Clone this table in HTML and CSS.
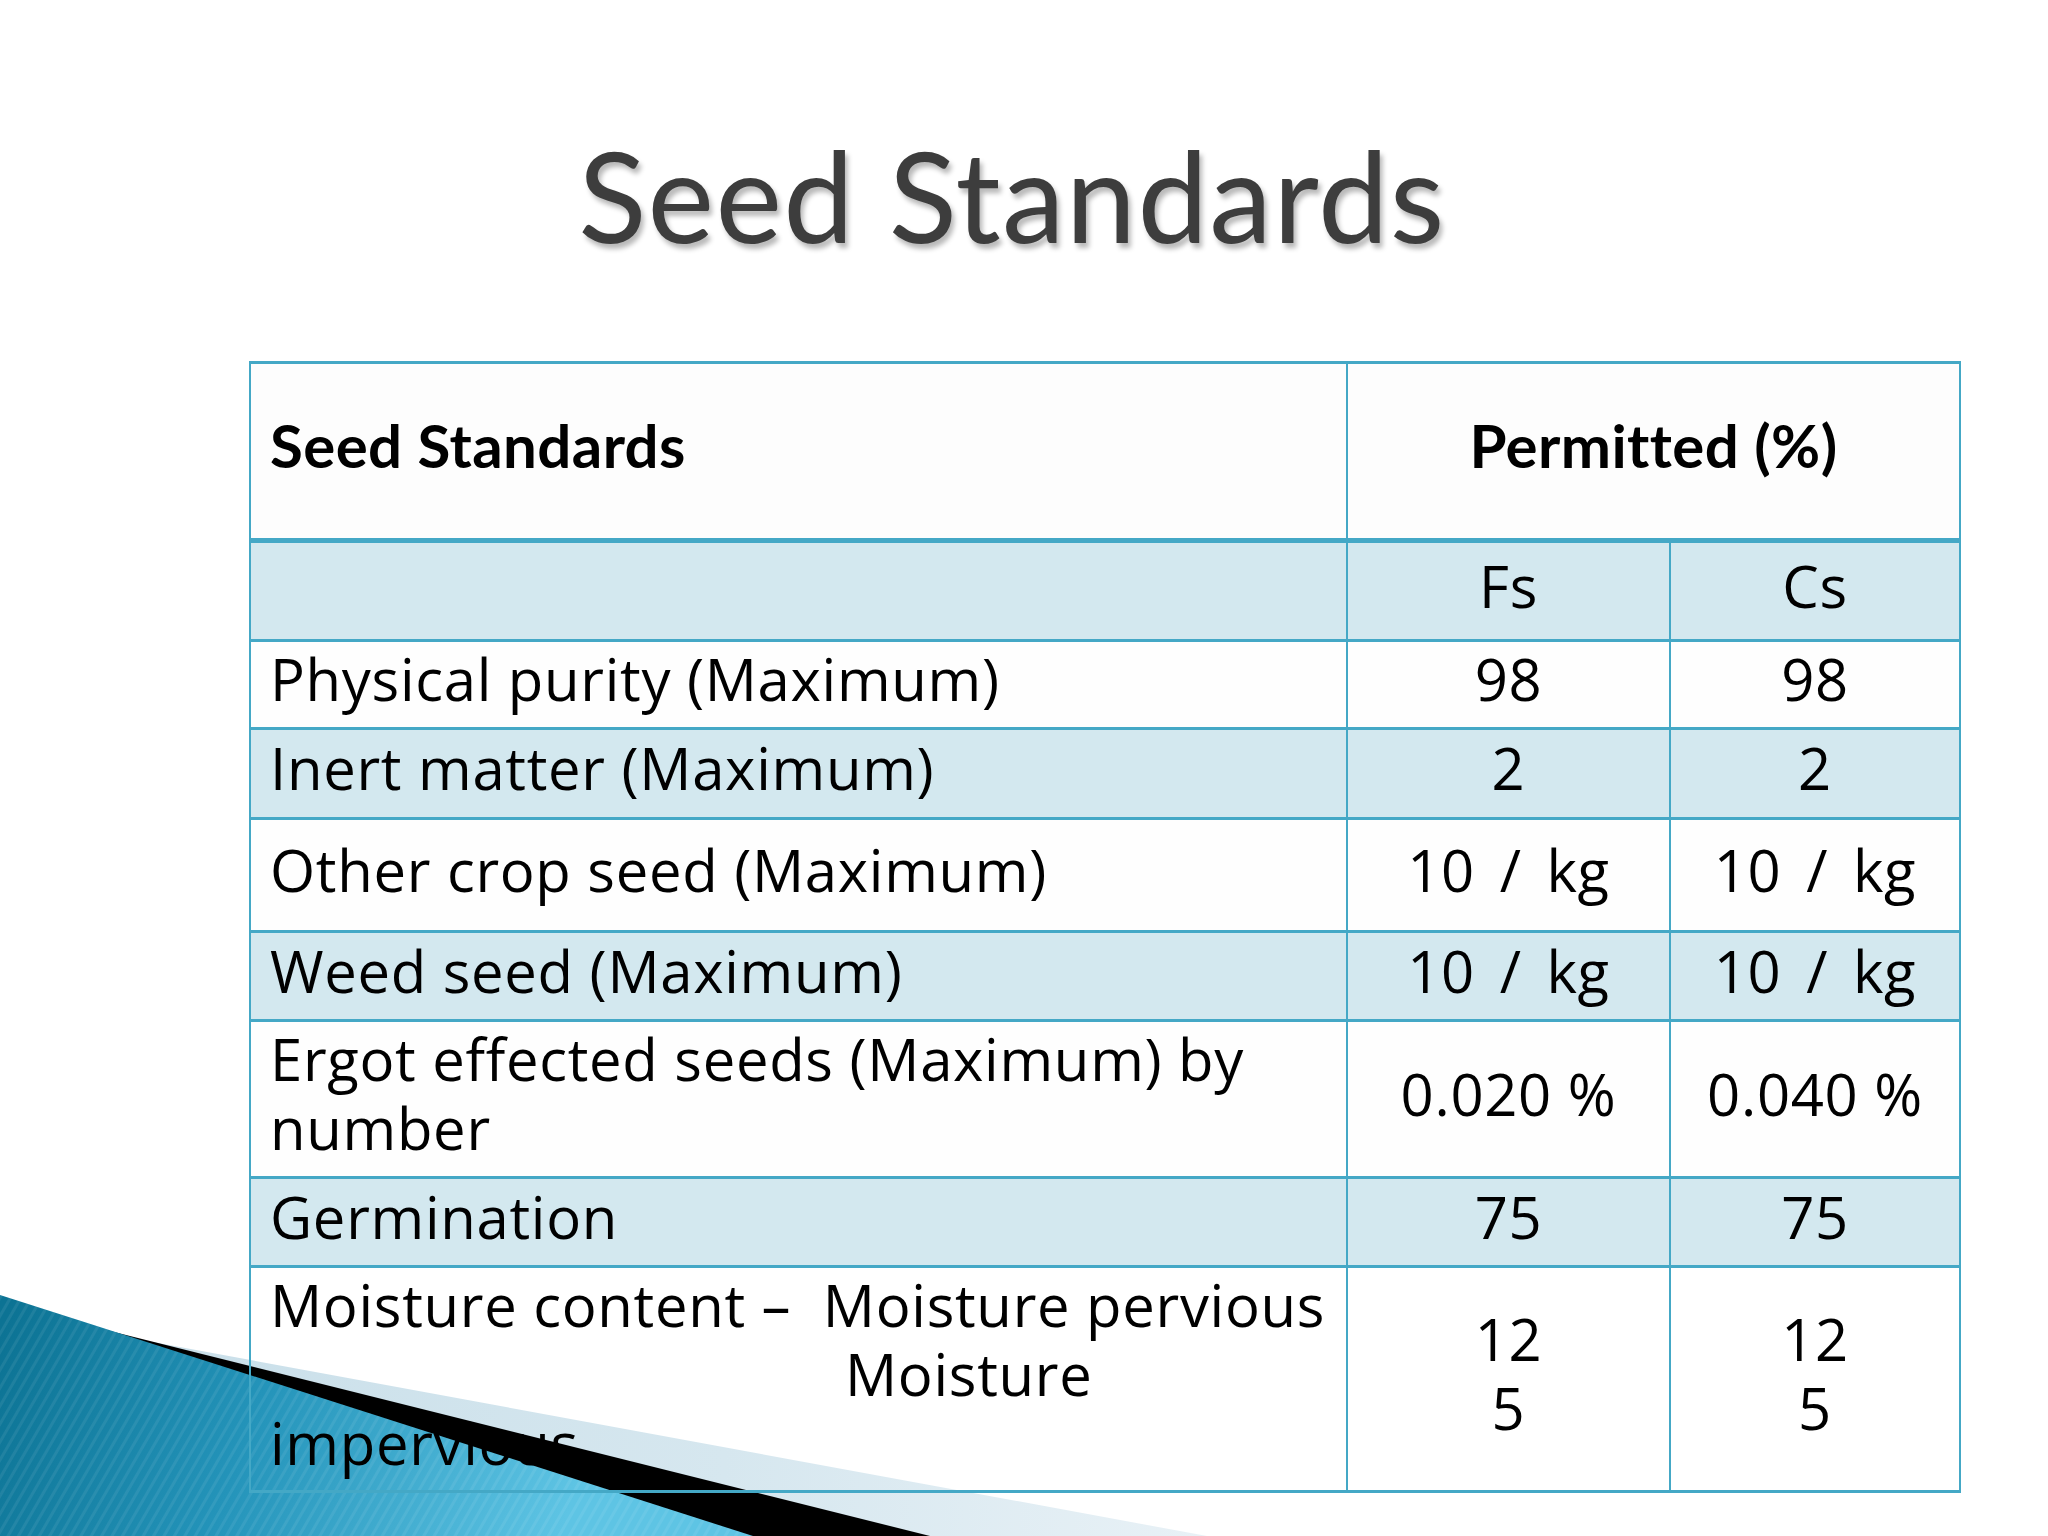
FILE: index.html
```html
<!DOCTYPE html>
<html lang="en">
<head>
<meta charset="utf-8">
<title>Seed Standards</title>
<link rel="stylesheet" href="styles.css">
</head>
<body>
<div class="slide">
  <svg class="deco" width="1220" height="241" viewBox="0 0 1220 241" aria-hidden="true">
    <defs>
      <linearGradient id="pale" x1="0" y1="0" x2="1" y2="0">
        <stop offset="0" stop-color="#c6dde8"/>
        <stop offset="0.6" stop-color="#d6e7ef"/>
        <stop offset="1" stop-color="#e8f1f6"/>
      </linearGradient>
      <linearGradient id="blue" gradientUnits="userSpaceOnUse" x1="0" y1="40" x2="560" y2="241">
        <stop offset="0" stop-color="#0c7394"/>
        <stop offset="0.45" stop-color="#2494ba"/>
        <stop offset="1" stop-color="#5ec4e4"/>
      </linearGradient>
      <pattern id="stripes" width="9" height="9" patternUnits="userSpaceOnUse" patternTransform="rotate(30)">
        <rect width="3" height="9" fill="#ffffff" fill-opacity="0.07"/>
      </pattern>
    </defs>
    <polygon points="0,19 1207,241 0,241" fill="url(#pale)"/>
    <polygon points="0,8.5 930,241 0,241" fill="#000"/>
    <polygon points="0,0 753,241 0,241" fill="url(#blue)"/>
    <polygon points="0,0 753,241 0,241" fill="url(#stripes)"/>
  </svg>

  <h1 class="title">Seed Standards</h1>

  <table class="std">
    <colgroup>
      <col class="c1">
      <col class="c2">
      <col class="c3">
    </colgroup>
    <tr class="row-head">
      <th class="lbl">Seed Standards</th>
      <th class="val" colspan="2">Permitted (%)</th>
    </tr>
    <tr class="band row-fs">
      <td class="lbl"></td>
      <td class="val">Fs</td>
      <td class="val">Cs</td>
    </tr>
    <tr class="plain row-phys">
      <td class="lbl">Physical purity (Maximum)</td>
      <td class="val">98</td>
      <td class="val">98</td>
    </tr>
    <tr class="band row-inert">
      <td class="lbl">Inert matter (Maximum)</td>
      <td class="val">2</td>
      <td class="val">2</td>
    </tr>
    <tr class="plain row-other">
      <td class="lbl">Other crop seed (Maximum)</td>
      <td class="val wide">10 / kg</td>
      <td class="val wide">10 / kg</td>
    </tr>
    <tr class="band row-weed">
      <td class="lbl">Weed seed (Maximum)</td>
      <td class="val wide">10 / kg</td>
      <td class="val wide">10 / kg</td>
    </tr>
    <tr class="plain row-ergot">
      <td class="lbl">Ergot effected seeds (Maximum) by number</td>
      <td class="val">0.020 %</td>
      <td class="val">0.040 %</td>
    </tr>
    <tr class="band row-germ">
      <td class="lbl">Germination</td>
      <td class="val">75</td>
      <td class="val">75</td>
    </tr>
    <tr class="clear row-moist">
      <td class="lbl">
        <span class="line">Moisture content –&nbsp; Moisture pervious</span>
        <span class="line indent">Moisture</span>
        <span class="line">impervious</span>
      </td>
      <td class="val"><span class="line">12</span><span class="line">5</span></td>
      <td class="val"><span class="line">12</span><span class="line">5</span></td>
    </tr>
  </table>
</div>
</body>
</html>
```

FILE: styles.css
```css
html, body {
  margin: 0;
  padding: 0;
  background: #ffffff;
}

.slide {
  position: relative;
  width: 2048px;
  height: 1536px;
  overflow: hidden;
  background: #ffffff;
  display: flex;
  flex-direction: column;
}

.deco {
  position: absolute;
  left: 0;
  bottom: 0;
  z-index: 0;
  display: block;
}

.title {
  margin: 132px 0 0 0;
  padding: 0 24px 0 0;
  height: 126px;
  font-family: "Lato", "Open Sans", sans-serif;
  font-weight: 400;
  font-size: 126px;
  line-height: 126px;
  text-align: center;
  color: #3d3d3d;
  text-shadow: 3px 5px 5px rgba(0, 0, 0, 0.28), 0 1px 0 rgba(255, 255, 255, 0.4);
  letter-spacing: 1.3px;
}

.std {
  position: relative;
  z-index: 1;
  margin: 103px 0 0 249px;
  width: 1710px;
  table-layout: fixed;
  border-collapse: collapse;
  font-family: "Open Sans", sans-serif;
  font-size: 58px;
  line-height: 69px;
  letter-spacing: 0.7px;
  color: #000000;
}

.c1 { width: 1097px; }
.c2 { width: 323px; }
.c3 { width: 290px; }

.std th,
.std td {
  border: 2px solid #44a8c6;
  border-top-width: 3px;
  border-bottom-width: 3px;
  padding: 0 13px 12px 19px;
  vertical-align: middle;
  font-weight: 400;
}

.std .val {
  padding-left: 13px;
}

.std th {
  font-family: "Lato", "Open Sans", sans-serif;
  font-weight: 700;
  font-size: 60px;
  letter-spacing: 0.4px;
  background: #fdfdfd;
  border-bottom-width: 5px;
}

.lbl { text-align: left; }
.val { text-align: center; }
.wide { word-spacing: 9px; }

.band td { background: #d3e8ef; }
.plain td { background: #fefefe; }
.clear td { background: transparent; }

.row-head  { height: 178px; }
.row-fs    { height: 100px; }
.row-phys  { height: 88px; }
.row-inert { height: 90px; }
.row-other { height: 113px; }
.row-weed  { height: 89px; }
.row-ergot { height: 157px; }
.row-germ  { height: 89px; }
.row-moist { height: 225px; }

.line {
  display: block;
  white-space: nowrap;
}

.indent {
  padding-left: 575px;
}
```
